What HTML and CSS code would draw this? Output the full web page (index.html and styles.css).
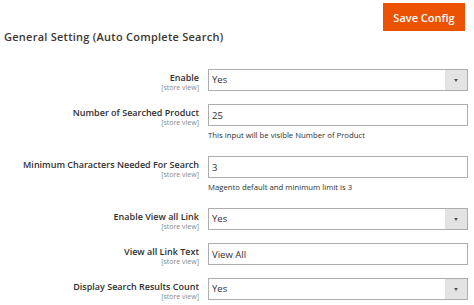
FILE: index.html
```html
<!DOCTYPE html>
<html lang="en">
<head>
    <meta charset="UTF-8">
    <title>General Setting (Auto Complete Search)</title>
    <link rel="stylesheet" href="styles.css">
</head>
<body>
    <div class="page-actions">
        <button class="save-btn" type="button">Save Config</button>
    </div>

    <h2 class="section-title">General Setting (Auto Complete Search)</h2>

    <form class="config-form">
        <div class="form-row">
            <div class="form-label">
                <label>Enable</label>
                <span class="scope">[store view]</span>
            </div>
            <div class="form-field">
                <div class="select-box">
                    <span class="select-value">Yes</span>
                    <span class="select-arrow"></span>
                </div>
            </div>
        </div>

        <div class="form-row">
            <div class="form-label">
                <label>Number of Searched Product</label>
                <span class="scope">[store view]</span>
            </div>
            <div class="form-field">
                <input type="text" value="25">
                <div class="note">This input will be visible Number of Product</div>
            </div>
        </div>

        <div class="form-row">
            <div class="form-label">
                <label>Minimum Characters Needed For Search</label>
                <span class="scope">[store view]</span>
            </div>
            <div class="form-field">
                <input type="text" value="3">
                <div class="note">Magento default and minimum limit is 3</div>
            </div>
        </div>

        <div class="form-row">
            <div class="form-label">
                <label>Enable View all Link</label>
                <span class="scope">[store view]</span>
            </div>
            <div class="form-field">
                <div class="select-box">
                    <span class="select-value">Yes</span>
                    <span class="select-arrow"></span>
                </div>
            </div>
        </div>

        <div class="form-row">
            <div class="form-label">
                <label>View all Link Text</label>
                <span class="scope">[store view]</span>
            </div>
            <div class="form-field">
                <input type="text" value="View All">
            </div>
        </div>

        <div class="form-row">
            <div class="form-label">
                <label>Display Search Results Count</label>
                <span class="scope">[store view]</span>
            </div>
            <div class="form-field">
                <div class="select-box">
                    <span class="select-value">Yes</span>
                    <span class="select-arrow"></span>
                </div>
            </div>
        </div>
    </form>
</body>
</html>
```

FILE: styles.css
```css
* {
    margin: 0;
    padding: 0;
    box-sizing: border-box;
    font-family: 'Open Sans', 'Liberation Sans', sans-serif;
}

body {
    background-color: #fff;
    color: #303030;
    width: 474px;
    overflow: hidden;
}

.page-actions {
    display: flex;
    justify-content: flex-end;
    padding: 3px 9px 0 0;
}

.save-btn {
    background-color: #eb5202;
    color: #fff;
    border: none;
    height: 28px;
    width: 82px;
    font-size: 11px;
    font-weight: 600;
}

.section-title {
    font-size: 11px;
    font-weight: 600;
    color: #41362f;
    padding-left: 4px;
    line-height: 14px;
    margin-top: -1px;
    letter-spacing: 0.25px;
}

.config-form {
    margin-top: 25px;
}

.form-row {
    display: flex;
    margin-bottom: 12px;
}

.form-label {
    width: 199px;
    flex-shrink: 0;
    text-align: right;
    display: flex;
    flex-direction: column;
    padding-top: 3px;
}

.form-label label {
    font-size: 9px;
    font-weight: 600;
    line-height: 12px;
    color: #303030;
    white-space: nowrap;
}

.scope {
    font-size: 7px;
    color: #8a8a8a;
    line-height: 8px;
}

.form-field {
    width: 260px;
    margin-left: 9px;
}

input {
    display: block;
    width: 100%;
    height: 22px;
    border: 1px solid #adadad;
    padding: 0 3px;
    font-size: 9.5px;
    color: #303030;
}

.select-box {
    display: flex;
    height: 22px;
    border: 1px solid #adadad;
    align-items: stretch;
}

.select-value {
    flex: 1;
    font-size: 9.5px;
    line-height: 20px;
    padding-left: 3px;
}

.select-arrow {
    width: 22px;
    background-color: #e3e3e3;
    display: flex;
    align-items: center;
    justify-content: center;
}

.select-arrow::after {
    content: "";
    border-left: 2.5px solid transparent;
    border-right: 2.5px solid transparent;
    border-top: 3.5px solid #555;
}

.note {
    font-size: 7.75px;
    color: #303030;
    margin-top: 3px;
    margin-bottom: 3px;
    line-height: 12px;
}
```
